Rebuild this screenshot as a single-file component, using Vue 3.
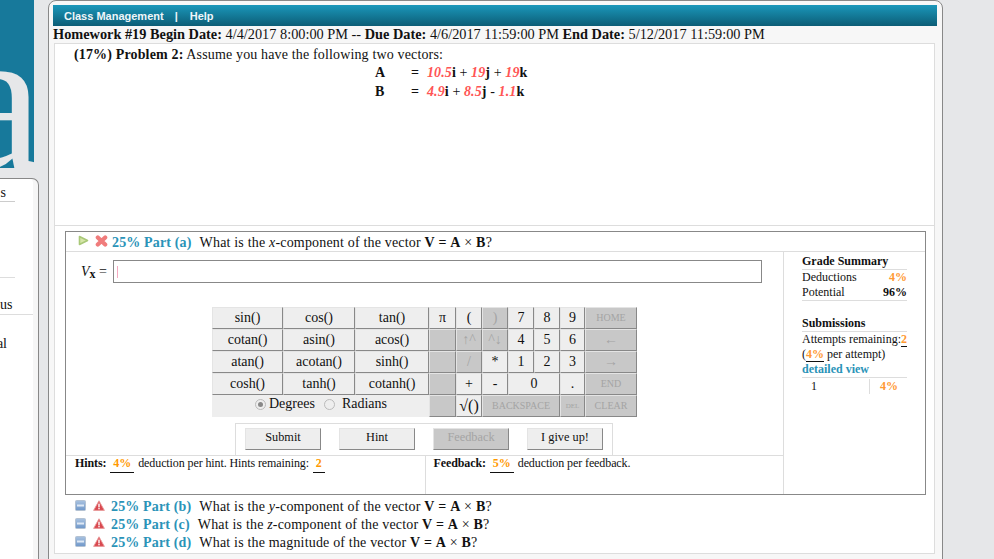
<script setup>
const leftKeys = ['sin()','cos()','tan()','cotan()','asin()','acos()','atan()','acotan()','sinh()','cosh()','tanh()','cotanh()']
const padKeys = [
  { t: 'π' }, { t: '(' }, { t: ')', off: 1 }, { t: '7' }, { t: '8' }, { t: '9' }, { t: 'HOME', off: 1, small: 1 },
  { t: '', off: 1 }, { t: '↑^', off: 1 }, { t: '^↓', off: 1 }, { t: '4' }, { t: '5' }, { t: '6' }, { t: '←', off: 1 },
  { t: '', off: 1 }, { t: '/', off: 1 }, { t: '*' }, { t: '1' }, { t: '2' }, { t: '3' }, { t: '→', off: 1 },
  { t: '', off: 1 }, { t: '+' }, { t: '-' }, { t: '0', span: 2 }, { t: '.' }, { t: 'END', off: 1, small: 1 },
  { t: '', off: 1 }, { t: '√()', big: 1 }, { t: 'BACKSPACE', off: 1, span: 3, small: 1 }, { t: 'DEL', off: 1, tiny: 1 }, { t: 'CLEAR', off: 1, small: 1 }
]
const parts = [
  { l: 'b', q: 'y', txt: '-component of the vector ', w: 'What is the ' },
  { l: 'c', q: 'z', txt: '-component of the vector ', w: 'What is the ' },
  { l: 'd', q: '', txt: '', w: 'What is the magnitude of the vector ' }
]
</script>

<template>
  <div class="page">
    <aside class="left">
      <div class="logo"><span class="logo-a">a</span></div>
      <div class="side">
        <div class="side-in">
          <div class="s1">s</div>
          <div class="s2"></div>
          <div class="s3">us</div>
          <div class="s4">al</div>
        </div>
      </div>
    </aside>
    <main class="card">
      <nav class="bar"><b>Class Management</b><b class="sep">|</b><b>Help</b></nav>
      <div class="hw"><b>Homework #19 Begin Date:</b> 4/4/2017 8:00:00 PM -- <b>Due Date:</b> 4/6/2017 11:59:00 PM <b>End Date:</b> 5/12/2017 11:59:00 PM</div>
      <section class="sheet">
        <div class="problem">
          <p class="stmt"><b>(17%) Problem 2:</b> Assume you have the following two vectors:</p>
          <div class="vec"><b>A</b><b>=</b><span><i>10.5</i><b>i</b> + <i>19</i><b>j</b> + <i>19</i><b>k</b></span></div>
          <div class="vec"><b>B</b><b>=</b><span><i>4.9</i><b>i</b> + <i>8.5</i><b>j</b> - <i>1.1</i><b>k</b></span></div>
        </div>
        <div class="work">
          <div class="box">
            <div class="phead">
              <svg class="ic ic-play" width="11" height="11" viewBox="0 0 11 11"><path d="M1.5 1.5 L9.5 5.5 L1.5 9.5 Z" fill="#d6e6a8" stroke="#a9c878" stroke-width="1.6" stroke-linejoin="round"/></svg>
              <svg class="ic ic-x" width="13" height="12" viewBox="0 0 13 12"><path d="M2.8 2.4 L10.2 9.6 M10.2 2.4 L2.8 9.6" stroke="#f07c7c" stroke-width="4.2" stroke-linecap="round"/></svg>
              <b class="pname">25% Part (a)</b>
              <span class="q">What is the <i>x</i>-component of the vector <b>V</b> <b>=</b> <b>A</b> × <b>B</b>?</span>
            </div>
            <div class="pbody">
              <div class="pmain">
                <div class="answer">
                  <span class="vx"><i>V</i><b>x</b> =</span>
                  <div class="field"><span class="caret"></span></div>
                </div>
                <div class="keys">
                  <div class="lpad">
                    <div class="lgrid">
                      <button v-for="k in leftKeys" :key="k" class="key">{{ k }}</button>
                    </div>
                    <div class="radios">
                      <span class="radio on"></span><span>Degrees</span>
                      <span class="radio r2"></span><span>Radians</span>
                    </div>
                  </div>
                  <div class="rgrid">
                    <button v-for="(k, i) in padKeys" :key="i" class="key" :class="{ off: k.off, small: k.small, tiny: k.tiny, big: k.big, s2c: k.span === 2, s3c: k.span === 3 }">{{ k.t }}</button>
                  </div>
                </div>
                <div class="actions">
                  <button class="key act">Submit</button>
                  <button class="key act">Hint</button>
                  <button class="key act off">Feedback</button>
                  <button class="key act">I give up!</button>
                </div>
                <div class="notes">
                  <div class="note"><b>Hints:</b> <b class="u">4%</b> deduction per hint. Hints remaining: <b class="u n">2</b></div>
                  <div class="note fb"><b>Feedback:</b> <b class="u">5%</b> deduction per feedback.</div>
                </div>
              </div>
              <div class="summary">
                <div class="sh">Grade Summary</div>
                <div class="srows">
                  <div class="srow"><span>Deductions</span><b class="or">4%</b></div>
                  <div class="srow"><span>Potential</span><b>96%</b></div>
                </div>
                <div class="sh sub">Submissions</div>
                <div class="att">
                  <div class="srow top"><span>Attempts remaining:</span><b class="or ul">2</b></div>
                  <div>(<b class="or ul">4%</b> per attempt)</div>
                  <b class="dv">detailed view</b>
                </div>
                <div class="hist"><span class="h1">1</span><b class="or h2">4%</b></div>
              </div>
            </div>
          </div>
          <div class="others">
            <div v-for="p in parts" :key="p.l" class="orow">
              <svg class="ic ic-min" width="11" height="11" viewBox="0 0 11 11"><defs><linearGradient id="mg" x1="0" y1="0" x2="0" y2="1"><stop offset="0" stop-color="#a9c2e0"/><stop offset="1" stop-color="#6f97c9"/></linearGradient></defs><rect x=".5" y=".5" width="10" height="10" rx="1" fill="url(#mg)" stroke="#b4c2d2"/><rect x="2" y="4.5" width="7" height="2" fill="#dfe9f5"/></svg>
              <svg class="ic ic-w" width="12" height="11" viewBox="0 0 12 11"><path d="M6 .8 L11.4 10.4 H.6 Z" fill="#d9484f" stroke="#e99a9a" stroke-width=".9" stroke-linejoin="round"/><rect x="5.3" y="3.6" width="1.4" height="3.8" fill="#fff"/><rect x="5.3" y="8" width="1.4" height="1.3" fill="#fff"/></svg>
              <b class="pname">25% Part ({{ p.l }})</b>
              <span class="q">{{ p.w }}<i>{{ p.q }}</i>{{ p.txt }}<b>V</b> <b>=</b> <b>A</b> × <b>B</b>?</span>
            </div>
          </div>
        </div>
      </section>
    </main>
  </div>
</template>

<style>
html, body { margin: 0; background: #e6e7e9; overflow: hidden; }
</style>

<style scoped>
.page { display: flex; width: 994px; height: 559px; overflow: hidden; background: #e6e7e9; font-family: "Liberation Serif", "Times New Roman", serif; color: #111; font-size: 12px; }
.left { width: 39px; flex: none; display: flex; flex-direction: column; }
.logo { width: 34px; height: 168px; margin-bottom: 10px; background: #17799b; position: relative; overflow: hidden; }
.logo-a { position: absolute; left: -48px; top: -4px; font-size: 205px; line-height: 1; color: #e6e7e9; }
.side { flex: 1; border: 1px solid #888; border-left: 0; border-bottom: 0; border-top-right-radius: 7px; background: #f6f6f6; padding-right: 5px; }
.side-in { background: #fff; height: 100%; border-top-right-radius: 4px; font-size: 14px; overflow: hidden; }
.s1 { width: 15px; height: 23px; box-sizing: border-box; line-height: 17px; padding-top: 5px; padding-right: 9px; text-align: right; border-bottom: 1px solid #ccc; }
.s2 { width: 15px; height: 76px; box-sizing: border-box; border-bottom: 1px solid #ddd; }
.s3 { height: 37px; box-sizing: border-box; padding: 18px 25px 0 0; line-height: 17px; text-align: right; border-bottom: 1px solid #ddd; white-space: nowrap; }
.s4 { width: 7px; height: 17px; margin-top: 20px; line-height: 17px; text-align: right; direction: rtl; overflow: hidden; white-space: nowrap; }
.card { width: 895px; height: 600px; margin-left: 9px; box-sizing: border-box; flex: none; background: #f7f7f7; border: 1px solid #888; border-radius: 8px 8px 0 0; padding: 4px 5px 4px 4px; }
.bar { height: 21px; box-sizing: border-box; background: linear-gradient(#1b97ba, #0c5d76); color: #eef6fa; font-family: "Liberation Sans", Arial, sans-serif; font-size: 11px; line-height: 23px; padding-left: 11px; }
.sep { margin: 0 12px 0 11px; font-weight: 700; }
.hw { height: 17px; line-height: 17px; font-size: 14.32px; white-space: nowrap; }
.sheet { margin-left: 1px; width: 881px; height: 511px; box-sizing: border-box; background: #fff; border: 1px solid #ddd; }
.problem { height: 182px; box-sizing: border-box; border-bottom: 1px solid #ddd; padding: 2px 0 0 19px; font-size: 14px; }
.stmt { margin: 0; line-height: 17px; letter-spacing: .15px; }
.vec { display: grid; grid-template-columns: 36px 16px auto; justify-content: start; margin-left: 301px; height: 19px; line-height: 19px; }
.vec span { letter-spacing: .1px; }
.vec i { color: #f55; font-weight: 700; }
.work { padding: 5px 8px 0 10px; }
.box { height: 264px; box-sizing: border-box; border: 1px solid #888; display: flex; flex-direction: column; }
.phead { height: 20px; box-sizing: border-box; border-bottom: 1px solid #ddd; display: flex; align-items: center; padding: 2px 0 0 12px; font-size: 14px; white-space: nowrap; }
.ic { margin-bottom: 4px; }
.ic-play { margin-right: 6px; }
.ic-x { margin-right: 4px; }
.pname { color: #2a93b8; letter-spacing: .15px; margin-right: 8px; }
.q { letter-spacing: .18px; }
.pbody { flex: 1; display: flex; min-height: 0; }
.pmain { width: 717px; flex: none; border-right: 1px solid #ddd; display: flex; flex-direction: column; }
.answer { display: flex; align-items: center; height: 23px; margin-top: 8px; font-size: 14px; }
.vx { margin-left: 15px; width: 32px; }
.vx b { font-size: 12px; position: relative; top: 2px; }
.field { width: 647px; height: 21px; border: 1px solid #888; background: #fff; position: relative; }
.caret { position: absolute; left: 3px; top: 5px; width: 1px; height: 12px; background: #f5a9c0; }
.keys { display: flex; margin: 24px 0 0 146px; }
.lpad { width: 217px; background: #eee; }
.lgrid { display: grid; grid-template-columns: 71px 72px 74px; grid-auto-rows: 22px; background: #fff; }
.key { margin: 0; padding: 0; box-sizing: border-box; background: #eee; color: #111; border: 1px solid; border-color: #e4e4e4 #888 #888 #e4e4e4; font-family: "Liberation Serif", "Times New Roman", serif; font-size: 14px; line-height: 1; }
.key.off { background: #c8c8c8; color: #a4a4a4; }
.key.small { font-size: 10px; }
.key.tiny { font-size: 7px; }
.key.big { font-size: 16px; }
.radios { display: flex; align-items: center; height: 22px; box-sizing: border-box; padding: 0 0 4px 43px; font-size: 14px; }
.radio { width: 9px; height: 9px; border-radius: 50%; border: 1px solid #bbb; background: #eee; margin-right: 3px; position: relative; flex: none; }
.radio.on::after { content: ""; position: absolute; left: 2px; top: 2px; width: 5px; height: 5px; border-radius: 50%; background: #888; }
.r2 { margin-left: 9px; margin-right: 7px; }
.rgrid { display: grid; grid-template-columns: 27px 26px 26px 26px 26px 25px 52px; grid-auto-rows: 22px; }
.s2c { grid-column: span 2; }
.s3c { grid-column: span 3; }
.actions { display: flex; gap: 18px; width: 378px; height: 32px; margin: 6px 0 0 169px; box-sizing: border-box; border: 1px solid #ddd; border-bottom: 0; padding: 4px 9px 0; }
.act { width: 76px; height: 22px; font-size: 12.3px; padding-bottom: 3px; }
.notes { flex: 1; display: flex; border-top: 1px solid #ddd; }
.note { width: 359px; box-sizing: border-box; padding: 0 0 0 9px; font-size: 12px; line-height: 15px; white-space: nowrap; letter-spacing: -.1px; }
.fb { border-left: 1px solid #ddd; padding-left: 8px; }
.u { display: inline-block; color: #f90; border-bottom: 1px solid #111; padding: 0 3px; margin: 0 1px; height: 16px; letter-spacing: 0; }
.or { color: #f93; }
.summary { flex: 1; padding: 2px 18px 0 18px; font-size: 12px; line-height: 15px; }
.sh { font-weight: 700; height: 15px; border-bottom: 1px solid #ddd; }
.sub { border: 0; margin-top: 15px; }
.srows { border-bottom: 1px solid #ddd; }
.srow { display: flex; justify-content: space-between; }
.att { border-top: 1px solid #ddd; border-bottom: 1px solid #ddd; }
.top { height: 15px; }
.ul { border-bottom: 1px solid #111; display: inline-block; height: 15px; box-sizing: border-box; }
.dv { color: #2a93b8; }
.hist { display: flex; padding-top: 1px; }
.h1 { width: 68px; padding-left: 9px; border-right: 1px solid #ddd; box-sizing: border-box; }
.h2 { padding-left: 10px; }
.others { padding: 3px 0 0 10px; }
.orow { height: 18px; display: flex; align-items: center; font-size: 14px; white-space: nowrap; }
.ic-min { margin-right: 7px; }
.ic-w { margin-right: 6px; }
</style>
